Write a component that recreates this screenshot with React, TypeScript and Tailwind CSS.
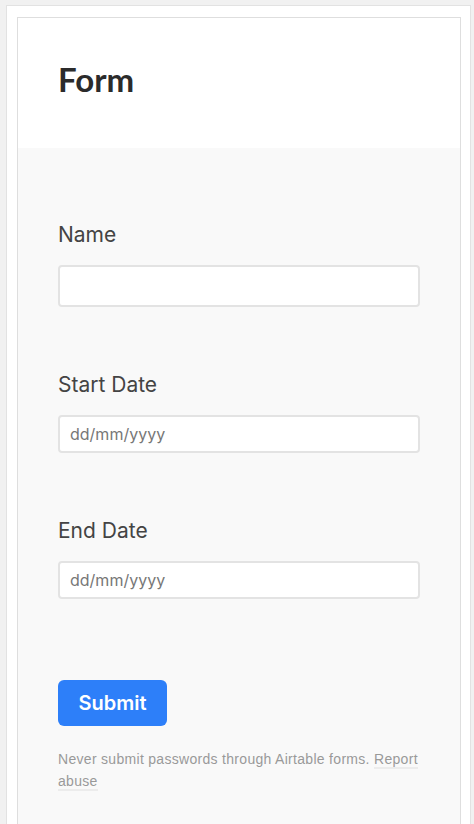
const labelFont = { fontFamily: 'Inter, "Liberation Sans", sans-serif' };

const Field = ({ label, placeholder, tall }: { label: string; placeholder?: string; tall?: boolean }) => (
  <div className="flex flex-col">
    <label className="text-[21px] leading-[31px] text-[#444]">{label}</label>
    <input
      type="text"
      placeholder={placeholder}
      className={`mt-[15px] w-full rounded-[4px] border-2 border-[#e3e3e3] bg-white px-[10px] text-[16px] text-[#333] placeholder:text-[#777] outline-none ${
        tall ? 'h-[42px]' : 'h-[38px]'
      }`}
    />
  </div>
);

const App = () => {
  return (
    <div className="min-h-[824px] bg-[#f1f1f1] pl-[6px] pr-[3px] pt-[5px]" style={labelFont}>
      <div className="min-h-[819px] border border-[#e2e2e2] bg-white pl-[10px] pr-[9px] pt-[11px]">
        <div className="min-h-[808px] border border-[#dedede] bg-[#f9f9f9]">
          <div className="h-[130px] bg-white px-[40px] pt-[41px]">
            <h1
              className="text-[33px] font-bold leading-[40px] text-[#2b2b2b]"
              style={{ fontFamily: 'Lato, "Noto Sans", sans-serif' }}
            >
              Form
            </h1>
          </div>
          <div className="px-[40px] pt-[71px] pb-10">
            <div className="flex flex-col gap-[62px]">
              <Field label="Name" tall />
              <Field label="Start Date" placeholder="dd/mm/yyyy" />
              <Field label="End Date" placeholder="dd/mm/yyyy" />
            </div>
            <button
              type="button"
              className="mt-[81px] h-[46px] w-[109px] rounded-[6px] bg-[#2d7ff9] text-[20px] font-semibold text-white"
            >
              Submit
            </button>
            <p
              className="mt-[22px] text-[14px] leading-[22px] tracking-[0.3px] text-[#999]"
              style={{ fontFamily: '"Liberation Sans", Arial, sans-serif' }}
            >
              Never submit passwords through Airtable forms.{' '}
              <a className="border-b-2 border-[#ececec] text-[#999]">Report</a>{' '}
              <a className="border-b-2 border-[#ececec] text-[#999]">abuse</a>
            </p>
          </div>
        </div>
      </div>
    </div>
  );
};

export default App;
